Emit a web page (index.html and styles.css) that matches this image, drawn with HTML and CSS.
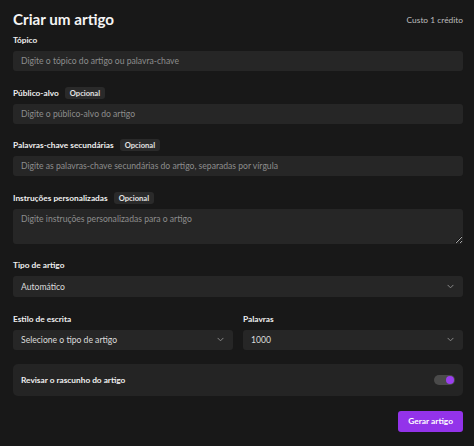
FILE: index.html
```html
<!DOCTYPE html>
<html lang="pt">
<head>
<meta charset="utf-8">
<link rel="stylesheet" href="styles.css">
</head>
<body>
<div class="page">
  <header class="head">
    <h1 class="title">Criar um artigo</h1>
    <span class="cost">Custo 1 crédito</span>
  </header>

  <div class="field">
    <div class="label-row"><span class="label">Tópico</span></div>
    <input class="input" type="text" placeholder="Digite o tópico do artigo ou palavra-chave">
  </div>

  <div class="field">
    <div class="label-row"><span class="label">Público-alvo</span><span class="badge">Opcional</span></div>
    <input class="input" type="text" placeholder="Digite o público-alvo do artigo">
  </div>

  <div class="field">
    <div class="label-row"><span class="label">Palavras-chave secundárias</span><span class="badge">Opcional</span></div>
    <input class="input" type="text" placeholder="Digite as palavras-chave secundárias do artigo, separadas por vírgula">
  </div>

  <div class="field">
    <div class="label-row"><span class="label">Instruções personalizadas</span><span class="badge">Opcional</span></div>
    <textarea class="input area" placeholder="Digite instruções personalizadas para o artigo"></textarea>
  </div>

  <div class="field">
    <div class="label-row"><span class="label">Tipo de artigo</span></div>
    <div class="select tall"><span class="value">Automático</span><svg class="chev" viewBox="0 0 8 5" width="7" height="5"><path d="M1 1l3 3 3-3" fill="none" stroke="#8c8c8c" stroke-width="1.1" stroke-linecap="round" stroke-linejoin="round"/></svg></div>
  </div>

  <div class="row2">
    <div class="field">
      <div class="label-row"><span class="label">Estilo de escrita</span></div>
      <div class="select"><span class="value">Selecione o tipo de artigo</span><svg class="chev" viewBox="0 0 8 5" width="7" height="5"><path d="M1 1l3 3 3-3" fill="none" stroke="#8c8c8c" stroke-width="1.1" stroke-linecap="round" stroke-linejoin="round"/></svg></div>
    </div>
    <div class="field">
      <div class="label-row"><span class="label">Palavras</span></div>
      <div class="select"><span class="value">1000</span><svg class="chev" viewBox="0 0 8 5" width="7" height="5"><path d="M1 1l3 3 3-3" fill="none" stroke="#8c8c8c" stroke-width="1.1" stroke-linecap="round" stroke-linejoin="round"/></svg></div>
    </div>
  </div>

  <div class="toggle-card">
    <span class="label">Revisar o rascunho do artigo</span>
    <span class="switch"><span class="knob"></span></span>
  </div>

  <div class="actions">
    <button class="btn" type="button">Gerar artigo</button>
  </div>
</div>
</body>
</html>
```

FILE: styles.css
```css
* { box-sizing: border-box; }
html, body {
  margin: 0;
  background: #181818;
}
body {
  font-family: Lato, "Noto Sans", sans-serif;
  color: #ececec;
}
.page {
  padding: 8px 11px 0 13px;
  display: flex;
  flex-direction: column;
  gap: 15.5px;
}
.head {
  display: flex;
  justify-content: space-between;
  align-items: center;
  height: 22px;
  margin-bottom: -11.5px;
}
.title {
  margin: 0;
  font-size: 15.2px;
  font-weight: 700;
  color: #f4f4f4;
}
.cost {
  font-size: 8.4px;
  color: #bdbdbd;
  padding-top: 2px;
}
.field {
  display: flex;
  flex-direction: column;
  gap: 5px;
}
.label-row {
  display: flex;
  align-items: center;
  gap: 6px;
  height: 12px;
}
.label {
  font-size: 8.3px;
  font-weight: 700;
  color: #efefef;
}
.badge {
  background: #2a2a2a;
  color: #e2e2e2;
  font-size: 7.6px;
  font-weight: 700;
  height: 12px;
  line-height: 12px;
  padding: 0 5px;
  border-radius: 3px;
}
.input {
  display: block;
  width: 100%;
  height: 20px;
  border: none;
  outline: none;
  background: #262626;
  border-radius: 3px;
  padding: 0 8px;
  font-family: inherit;
  font-size: 8.6px;
  color: #ddd;
}
.input::placeholder { color: #8d8d8d; }
.area {
  height: 35px;
  padding: 5px 8px;
  resize: vertical;
}
.select {
  height: 20px;
  background: #262626;
  border-radius: 3px;
  padding: 0 9px 0 8px;
  display: flex;
  align-items: center;
  justify-content: space-between;
}
.select.tall { height: 21px; }
.value {
  font-size: 8.6px;
  color: #dcdcdc;
}
.chev { display: block; }
.row2 {
  display: grid;
  grid-template-columns: 1fr 1fr;
  gap: 10px;
}
.toggle-card {
  margin-top: -1px;
  height: 32px;
  background: #242424;
  border-radius: 5px;
  display: flex;
  align-items: center;
  justify-content: space-between;
  padding: 0 8px 0 8px;
}
.switch {
  width: 21px;
  height: 10px;
  border-radius: 5px;
  background: #4a4a4a;
  display: flex;
  align-items: center;
  justify-content: flex-end;
  padding: 1px;
}
.knob {
  width: 8px;
  height: 8px;
  border-radius: 50%;
  background: #9b3ff0;
}
.actions {
  display: flex;
  justify-content: flex-end;
  margin-top: -1px;
}
.btn {
  height: 21px;
  padding: 0 10px;
  border: none;
  border-radius: 3px;
  background: #9333ea;
  color: #fff;
  font-family: inherit;
  font-size: 8.4px;
  font-weight: 700;
}
```
